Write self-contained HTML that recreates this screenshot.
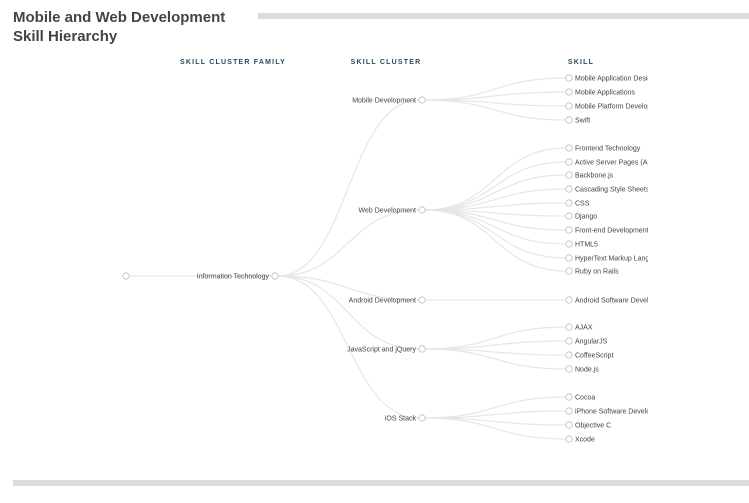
<!DOCTYPE html>
<html><head><meta charset="utf-8"><style>
body{margin:0;width:749px;height:503px;background:#fff;overflow:hidden;font-family:"Liberation Sans",sans-serif;position:relative}
h1{position:absolute;left:13px;top:8px;margin:0;font-size:15px;line-height:19px;color:#444;font-weight:bold}
.bar{position:absolute;background:#ddd;height:6px}
svg{position:absolute;left:0;top:0}
text{font-family:"Liberation Sans",sans-serif}
.n{font-size:7px;fill:#444}
.h{font-size:7px;font-weight:bold;fill:#2b4a5a;letter-spacing:1.2px}
path{fill:none;stroke:#e6e6e6;stroke-width:1.2}
circle{fill:#fff;stroke:#bbb;stroke-width:0.8}
</style></head><body>
<h1>Mobile and Web Development<br>Skill Hierarchy</h1>
<div class="bar" style="left:258px;top:13px;width:491px"></div>
<div class="bar" style="left:13px;top:480px;width:736px"></div>
<svg width="749" height="503">
<defs><clipPath id="c"><rect x="0" y="0" width="648" height="503"/></clipPath></defs>
<text class="h" x="233" y="64" text-anchor="middle">SKILL CLUSTER FAMILY</text>
<text class="h" x="386" y="64" text-anchor="middle">SKILL CLUSTER</text>
<text class="h" x="581" y="64" text-anchor="middle">SKILL</text>
<path d="M129 276H272"/>
<path d="M278 276C348 276 348 100 419 100"/>
<path d="M278 276C348 276 348 210 419 210"/>
<path d="M278 276C348 276 348 300 419 300"/>
<path d="M278 276C348 276 348 349 419 349"/>
<path d="M278 276C348 276 348 418 419 418"/>
<g>
<path d="M425 100C495 100 495 78 566 78"/><path d="M425 100C495 100 495 92 566 92"/><path d="M425 100C495 100 495 106 566 106"/><path d="M425 100C495 100 495 120 566 120"/>
<path d="M425 210C495 210 495 148 566 148"/><path d="M425 210C495 210 495 162 566 162"/><path d="M425 210C495 210 495 175 566 175"/><path d="M425 210C495 210 495 189 566 189"/><path d="M425 210C495 210 495 203 566 203"/><path d="M425 210C495 210 495 216 566 216"/><path d="M425 210C495 210 495 230 566 230"/><path d="M425 210C495 210 495 244 566 244"/><path d="M425 210C495 210 495 258 566 258"/><path d="M425 210C495 210 495 271 566 271"/>
<path d="M425 300H566"/>
<path d="M425 349C495 349 495 327 566 327"/><path d="M425 349C495 349 495 341 566 341"/><path d="M425 349C495 349 495 355 566 355"/><path d="M425 349C495 349 495 369 566 369"/>
<path d="M425 418C495 418 495 397 566 397"/><path d="M425 418C495 418 495 411 566 411"/><path d="M425 418C495 418 495 425 566 425"/><path d="M425 418C495 418 495 439 566 439"/>
</g>
<circle cx="126" cy="276" r="3.2"/>
<circle cx="275" cy="276" r="3.2"/><text class="n" x="269" y="278.5" text-anchor="end">Information Technology</text>
<circle cx="422" cy="100" r="3.2"/><text class="n" x="416" y="102.5" text-anchor="end">Mobile Development</text>
<circle cx="422" cy="210" r="3.2"/><text class="n" x="416" y="212.5" text-anchor="end">Web Development</text>
<circle cx="422" cy="300" r="3.2"/><text class="n" x="416" y="302.5" text-anchor="end">Android Development</text>
<circle cx="422" cy="349" r="3.2"/><text class="n" x="416" y="351.5" text-anchor="end">JavaScript and jQuery</text>
<circle cx="422" cy="418" r="3.2"/><text class="n" x="416" y="420.5" text-anchor="end">iOS Stack</text>
<g clip-path="url(#c)">
<circle cx="569" cy="78" r="3.2"/><text class="n" x="575" y="80.5">Mobile Application Design</text>
<circle cx="569" cy="92" r="3.2"/><text class="n" x="575" y="94.5">Mobile Applications</text>
<circle cx="569" cy="106" r="3.2"/><text class="n" x="575" y="108.5">Mobile Platform Development</text>
<circle cx="569" cy="120" r="3.2"/><text class="n" x="575" y="122.5">Swift</text>
<circle cx="569" cy="148" r="3.2"/><text class="n" x="575" y="150.5">Frontend Technology</text>
<circle cx="569" cy="162" r="3.2"/><text class="n" x="575" y="164.5">Active Server Pages (ASP)</text>
<circle cx="569" cy="175" r="3.2"/><text class="n" x="575" y="177.5">Backbone.js</text>
<circle cx="569" cy="189" r="3.2"/><text class="n" x="575" y="191.5">Cascading Style Sheets</text>
<circle cx="569" cy="203" r="3.2"/><text class="n" x="575" y="205.5">CSS</text>
<circle cx="569" cy="216" r="3.2"/><text class="n" x="575" y="218.5">Django</text>
<circle cx="569" cy="230" r="3.2"/><text class="n" x="575" y="232.5">Front-end Development</text>
<circle cx="569" cy="244" r="3.2"/><text class="n" x="575" y="246.5">HTML5</text>
<circle cx="569" cy="258" r="3.2"/><text class="n" x="575" y="260.5">HyperText Markup Language</text>
<circle cx="569" cy="271" r="3.2"/><text class="n" x="575" y="273.5">Ruby on Rails</text>
<circle cx="569" cy="300" r="3.2"/><text class="n" x="575" y="302.5">Android Software Development</text>
<circle cx="569" cy="327" r="3.2"/><text class="n" x="575" y="329.5">AJAX</text>
<circle cx="569" cy="341" r="3.2"/><text class="n" x="575" y="343.5">AngularJS</text>
<circle cx="569" cy="355" r="3.2"/><text class="n" x="575" y="357.5">CoffeeScript</text>
<circle cx="569" cy="369" r="3.2"/><text class="n" x="575" y="371.5">Node.js</text>
<circle cx="569" cy="397" r="3.2"/><text class="n" x="575" y="399.5">Cocoa</text>
<circle cx="569" cy="411" r="3.2"/><text class="n" x="575" y="413.5">iPhone Software Development</text>
<circle cx="569" cy="425" r="3.2"/><text class="n" x="575" y="427.5">Objective C</text>
<circle cx="569" cy="439" r="3.2"/><text class="n" x="575" y="441.5">Xcode</text>
</g>
</svg>
</body></html>
